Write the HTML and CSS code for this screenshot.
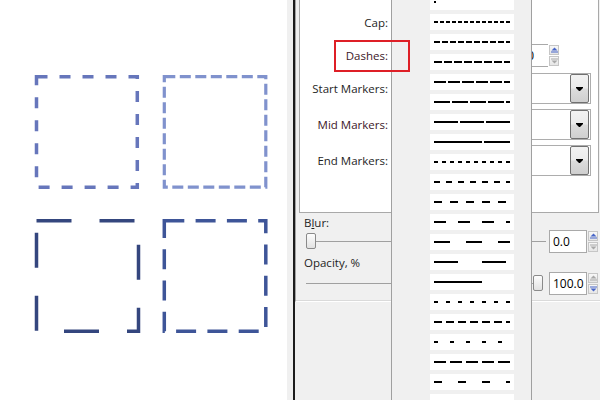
FILE: index.html
```html
<!DOCTYPE html>
<html>
<head>
<meta charset="utf-8">
<link rel="stylesheet" href="styles.css">
</head>
<body>
<div class="app">
  <div class="canvas">
    <svg class="drawing" width="287" height="400" viewBox="0 0 287 400">
      <rect x="36.5" y="76.7" width="100.8" height="110.5" fill="none" stroke="#6676bb" stroke-width="3.5" stroke-dasharray="11 12"/>
      <rect x="164.3" y="76.7" width="101.5" height="110.5" fill="none" stroke="#8092cd" stroke-width="3.2" stroke-dasharray="11 4.5"/>
      <rect x="36.5" y="220.8" width="102" height="110.5" fill="none" stroke="#34467e" stroke-width="3.5" stroke-dasharray="35 28"/>
      <rect x="164.3" y="220.8" width="101.5" height="110.5" fill="none" stroke="#3e5598" stroke-width="3.5" stroke-dasharray="20 11.3"/>
    </svg>
  </div>
  <div class="splitter"></div>
  <div class="panel">
    <div class="page">
      <div class="frame">
        <div class="row row-cap"><span class="lbl">Cap:</span><div class="ctl"></div></div>
        <div class="row row-dash">
          <span class="lbl lbl-mark">Dashes:</span>
          <div class="ctl">
            <div class="spin spin-dash">
              <div class="field field-dash">0</div>
              <div class="spin-btns">
                <div class="sbtn"><svg width="7" height="6" viewBox="0 0 7 6"><path d="M3.5 0.5L6.5 3.5H0.5Z" fill="#4664c8"/><rect x="0" y="4.5" width="7" height="1" fill="#4664c8"/></svg></div>
                <div class="sbtn"><svg width="7" height="6" viewBox="0 0 7 6"><rect x="0" y="0.5" width="7" height="1" fill="#a8a8a8"/><path d="M0.5 2.5H6.5L3.5 5.5Z" fill="#a8a8a8"/></svg></div>
              </div>
            </div>
          </div>
        </div>
        <div class="row row-combo">
          <span class="lbl">Start Markers:</span>
          <div class="combo"><div class="cbtn"><svg width="7" height="4" viewBox="0 0 7 4"><path d="M0 0H7V1L4 4H3L0 1Z" fill="#000"/></svg></div></div>
        </div>
        <div class="row row-combo">
          <span class="lbl lbl-mark">Mid Markers:</span>
          <div class="combo"><div class="cbtn"><svg width="7" height="4" viewBox="0 0 7 4"><path d="M0 0H7V1L4 4H3L0 1Z" fill="#000"/></svg></div></div>
        </div>
        <div class="row row-combo">
          <span class="lbl">End Markers:</span>
          <div class="combo"><div class="cbtn"><svg width="7" height="4" viewBox="0 0 7 4"><path d="M0 0H7V1L4 4H3L0 1Z" fill="#000"/></svg></div></div>
        </div>
      </div>
      <div class="effects">
        <div class="elbl">B<span class="mn">l</span>ur:</div>
        <div class="srow">
          <div class="slider">
            <div class="track"></div>
            <div class="thumb" style="left:0px"></div>
          </div>
          <div class="spin">
            <div class="field">0.0</div>
            <div class="spin-btns">
              <div class="sbtn"><svg width="7" height="6" viewBox="0 0 7 6"><path d="M3.5 0.5L6.5 3.5H0.5Z" fill="#4664c8"/><rect x="0" y="4.5" width="7" height="1" fill="#4664c8"/></svg></div>
              <div class="sbtn"><svg width="7" height="6" viewBox="0 0 7 6"><rect x="0" y="0.5" width="7" height="1" fill="#a8a8a8"/><path d="M0.5 2.5H6.5L3.5 5.5Z" fill="#a8a8a8"/></svg></div>
            </div>
          </div>
        </div>
        <div class="elbl elbl2">Opacity, %</div>
        <div class="srow srow2">
          <div class="slider">
            <div class="track track-short"></div>
            <div class="thumb" style="left:227px"></div>
          </div>
          <div class="spin">
            <div class="field">100.0</div>
            <div class="spin-btns">
              <div class="sbtn"><svg width="7" height="6" viewBox="0 0 7 6"><path d="M3.5 0.5L6.5 3.5H0.5Z" fill="#a8a8a8"/><rect x="0" y="4.5" width="7" height="1" fill="#a8a8a8"/></svg></div>
              <div class="sbtn"><svg width="7" height="6" viewBox="0 0 7 6"><rect x="0" y="0.5" width="7" height="1" fill="#4664c8"/><path d="M0.5 2.5H6.5L3.5 5.5Z" fill="#4664c8"/></svg></div>
            </div>
          </div>
        </div>
      </div>
    </div>
  </div>

  <div class="popup">
    <div class="items">
      <div class="item"><svg width="84" height="16"><line x1="4" y1="8" x2="80" y2="8" stroke="#000" stroke-width="2" stroke-dasharray="2 100"/></svg></div>
      <div class="item"><svg width="84" height="16"><line x1="4" y1="8" x2="80" y2="8" stroke="#000" stroke-width="2" stroke-dasharray="4 2"/></svg></div>
      <div class="item"><svg width="84" height="16"><line x1="4" y1="8" x2="80" y2="8" stroke="#000" stroke-width="2" stroke-dasharray="6 2"/></svg></div>
      <div class="item"><svg width="84" height="16"><line x1="4" y1="8" x2="80" y2="8" stroke="#000" stroke-width="2" stroke-dasharray="8 2"/></svg></div>
      <div class="item"><svg width="84" height="16"><line x1="4" y1="8" x2="80" y2="8" stroke="#000" stroke-width="2" stroke-dasharray="12 2"/></svg></div>
      <div class="item"><svg width="84" height="16"><line x1="4" y1="8" x2="80" y2="8" stroke="#000" stroke-width="2" stroke-dasharray="16 2"/></svg></div>
      <div class="item"><svg width="84" height="16"><line x1="4" y1="8" x2="80" y2="8" stroke="#000" stroke-width="2" stroke-dasharray="24 2"/></svg></div>
      <div class="item"><svg width="84" height="16"><line x1="4" y1="8" x2="80" y2="8" stroke="#000" stroke-width="2" stroke-dasharray="48 2"/></svg></div>
      <div class="item"><svg width="84" height="16"><line x1="4" y1="8" x2="80" y2="8" stroke="#000" stroke-width="2" stroke-dasharray="4 4"/></svg></div>
      <div class="item"><svg width="84" height="16"><line x1="4" y1="8" x2="80" y2="8" stroke="#000" stroke-width="2" stroke-dasharray="6 6"/></svg></div>
      <div class="item"><svg width="84" height="16"><line x1="4" y1="8" x2="80" y2="8" stroke="#000" stroke-width="2" stroke-dasharray="8 8"/></svg></div>
      <div class="item"><svg width="84" height="16"><line x1="4" y1="8" x2="80" y2="8" stroke="#000" stroke-width="2" stroke-dasharray="12 12"/></svg></div>
      <div class="item"><svg width="84" height="16"><line x1="4" y1="8" x2="80" y2="8" stroke="#000" stroke-width="2" stroke-dasharray="16 16"/></svg></div>
      <div class="item"><svg width="84" height="16"><line x1="4" y1="8" x2="80" y2="8" stroke="#000" stroke-width="2" stroke-dasharray="24 24"/></svg></div>
      <div class="item"><svg width="84" height="16"><line x1="4" y1="8" x2="80" y2="8" stroke="#000" stroke-width="2" stroke-dasharray="48 48"/></svg></div>
      <div class="item"><svg width="84" height="16"><line x1="4" y1="8" x2="80" y2="8" stroke="#000" stroke-width="2" stroke-dasharray="4 8"/></svg></div>
      <div class="item"><svg width="84" height="16"><line x1="4" y1="8" x2="80" y2="8" stroke="#000" stroke-width="2" stroke-dasharray="8 4"/></svg></div>
      <div class="item"><svg width="84" height="16"><line x1="4" y1="8" x2="80" y2="8" stroke="#000" stroke-width="2" stroke-dasharray="4 12"/></svg></div>
      <div class="item"><svg width="84" height="16"><line x1="4" y1="8" x2="80" y2="8" stroke="#000" stroke-width="2" stroke-dasharray="12 4"/></svg></div>
      <div class="item"><svg width="84" height="16"><line x1="4" y1="8" x2="80" y2="8" stroke="#000" stroke-width="2" stroke-dasharray="8 16"/></svg></div>
      <div class="item"><svg width="84" height="16"><line x1="4" y1="8" x2="80" y2="8" stroke="#000" stroke-width="2" stroke-dasharray="16 8"/></svg></div>
    </div>
  </div>
  <div class="mark"></div>
</div>
</body>
</html>
```
FILE: styles.css
```css
* { box-sizing: border-box; }
html, body { margin: 0; padding: 0; }
body {
  width: 600px;
  height: 400px;
  overflow: hidden;
  font-family: "Open Sans", "Noto Sans", sans-serif;
  font-size: 11.5px;
  color: #1e1e1e;
}
.app {
  position: relative;
  display: flex;
  width: 600px;
  height: 400px;
  overflow: hidden;
  background: #f0f0f0;
}
.canvas {
  width: 287px;
  flex: none;
  background: #fff;
}
.drawing { display: block; }
.splitter {
  width: 8px;
  flex: none;
  background: #f0f0f0;
  border-right: 2px solid #1c1c1c;
}
.panel {
  flex: 1;
  display: flex;
  flex-direction: column;
  background: #f0f0f0;
}
.page {
  border-left: 1px solid #a4a4a4;
  border-bottom: 1px solid #ffffff;
  box-shadow: inset 0 -1px 0 #dadada;
}
.frame {
  margin-left: 3px;
  width: 300px;
  height: 213px;
  background: #fff;
  border: 1px solid #a9a9a9;
  border-top: none;
  padding-top: 10px;
  padding-right: 7px;
  display: flex;
  flex-direction: column;
}
.row {
  display: flex;
  align-items: center;
  gap: 8px;
}
.lbl {
  width: 88px;
  flex: none;
  text-align: right;
  white-space: nowrap;
  line-height: 15px;
}
.lbl-mark { color: #3c1628; }
.ctl { flex: 1; height: 100%; }
.row-cap { height: 24px; }
.row-dash { height: 23px; margin-top: 10px; }
.row-combo { height: 31px; margin-top: 5px; }
.row-dash + .row-combo { margin-top: 6px; }
.spin {
  display: flex;
  align-items: flex-start;
  gap: 1px;
}
.spin-dash { height: 100%; width: 163px; }
.field {
  width: 38px;
  height: 23px;
  border: 1px solid #a9a9a9;
  background: #fff;
  padding-left: 3px;
  line-height: 21px;
  font-size: 12px;
  color: #000;
}
.field-dash {
  flex: 1;
  border-right: none;
  text-align: right;
  padding-right: 14px;
}
.spin-btns {
  display: flex;
  flex-direction: column;
  gap: 1px;
  padding-top: 1px;
}
.spin-dash .spin-btns { width: 10px; }
.sbtn {
  width: 10px;
  height: 10px;
  border: 1px solid #c6c6c6;
  background: linear-gradient(#f7f7f7, #e6e6e6);
  display: flex;
  align-items: center;
  justify-content: center;
}
.sbtn svg { display: block; }
.combo {
  flex: 1;
  height: 31px;
  border: 1px solid #adadad;
  background: #fff;
  display: flex;
  justify-content: flex-end;
  padding-right: 1px;
}
.cbtn {
  width: 19px;
  height: 29px;
  border: 1px solid #707070;
  border-radius: 2px;
  background: linear-gradient(#f2f2f2 0%, #ebebeb 48%, #dcdcdc 52%, #cfcfcf 100%);
  display: flex;
  align-items: center;
  justify-content: center;
}
.cbtn svg { display: block; margin-top: 1px; }
.effects {
  padding: 2px 2px 6px 8px;
}
.elbl {
  line-height: 15px;
  height: 15px;
}
.mn { text-decoration: underline; }
.elbl2 { margin-top: 2px; }
.srow {
  display: flex;
  align-items: flex-start;
  height: 23px;
  padding-left: 2px;
}
.srow2 { margin-top: 2px; }
.slider {
  position: relative;
  width: 240px;
  height: 23px;
  margin-right: 3px;
}
.track {
  position: absolute;
  left: 0;
  right: 0;
  top: 11px;
  height: 1px;
  background: #a0a0a0;
}
.track-short { right: 12px; }
.thumb {
  position: absolute;
  top: 3px;
  width: 10px;
  height: 16px;
  border: 1px solid #8a8a8a;
  border-radius: 2px;
  background: linear-gradient(#fdfdfd, #e2e2e2);
}
.popup {
  position: absolute;
  left: 391px;
  top: -10px;
  width: 141px;
  height: 430px;
  background: #f0f0f0;
  border-left: 1px solid #a0a0a0;
  border-right: 1px solid #a0a0a0;
  padding: 4px 0 0 38px;
}
.items {
  display: flex;
  flex-direction: column;
  gap: 4px;
}
.item {
  width: 84px;
  height: 16px;
  background: #fff;
}
.item svg { display: block; }
.mark {
  position: absolute;
  left: 334px;
  top: 40px;
  width: 76px;
  height: 32px;
  border: 2px solid #de1f26;
}
```
